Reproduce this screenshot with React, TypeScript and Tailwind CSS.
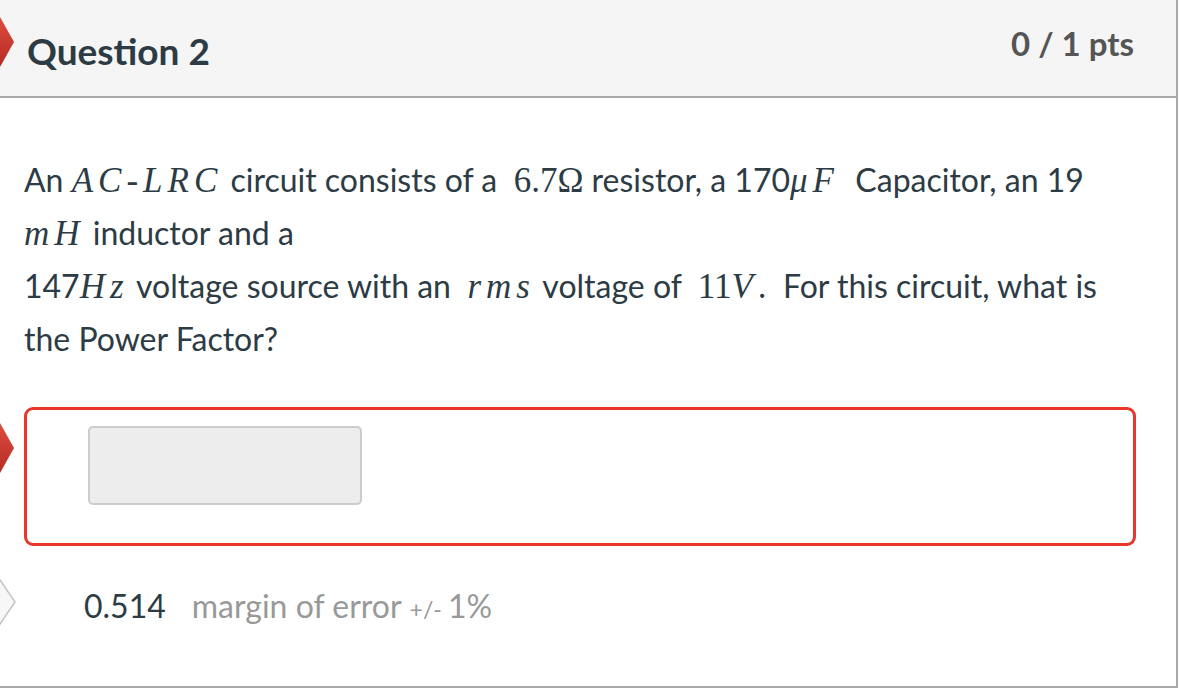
import React from "react";

const serif = "font-['Liberation_Serif','Times_New_Roman',serif]";

const Math: React.FC<{ children: React.ReactNode; className?: string }> = ({ children, className = "" }) => (
  <span className={`${serif} italic text-[35px] tracking-[5px] ${className}`}>{children}</span>
);

const Roman: React.FC<{ children: React.ReactNode; className?: string }> = ({ children, className = "" }) => (
  <span className={`${serif} text-[35px] ${className}`}>{children}</span>
);

const Arrow: React.FC<{ top: string; variant: "red" | "blank" }> = ({ top, variant }) => (
  <svg className={`absolute left-0 ${top}`} width="20" height="54" viewBox="0 0 20 54">
    <defs>
      <linearGradient id="redArrow" x1="0" y1="0" x2="0" y2="1">
        <stop offset="0" stopColor="#de4b3e" />
        <stop offset="1" stopColor="#b52c25" />
      </linearGradient>
    </defs>
    {variant === "red" ? (
      <polygon points="0,2 14,27 0,52" fill="url(#redArrow)" />
    ) : (
      <polygon points="-2,2 15,27 -2,52" fill="#f7f7f7" stroke="#c4c4c4" strokeWidth="1.5" />
    )}
  </svg>
);

export default function App() {
  return (
    <div className="relative w-[1180px] h-[692px] bg-white overflow-hidden font-['Lato','Noto_Sans',sans-serif] text-[#2d3b45]">
      <div className="w-[1178px] h-[688px] border-r-2 border-b-2 border-[#a8a8a8]">
        {/* header */}
        <div className="h-[98px] bg-[#f5f5f5] border-b-2 border-[#a8a8a8] flex items-start justify-between pl-[27px] pr-[42px]">
          <h2 className="mt-[32px] text-[37px] leading-none font-bold text-[#2d3b45]">Question 2</h2>
          <div className="mt-[27px] text-[33px] leading-none font-bold text-[#555555]">0 / 1 pts</div>
        </div>

        {/* question text */}
        <div className="px-[24px] pt-[56px] text-[32px] leading-[52px]">
          <p>
            An <Math>AC-LRC</Math> circuit consists of a&nbsp; <Roman>6.7Ω</Roman> resistor, a 170
            <Math>μF</Math>&nbsp; Capacitor, an 19
            <br />
            <Math>mH</Math> inductor and a
            <br />
            147<Math>Hz</Math> voltage source with an&nbsp; <Math>rms</Math> voltage of&nbsp;{" "}
            <Roman>11</Roman>
            <Math>V</Math>
            <Roman>.</Roman>&nbsp; For this circuit, what is
            <br />
            the Power Factor?
          </p>
        </div>

        {/* answer box */}
        <div className="ml-[24px] mr-[40px] mt-[42px] h-[139px] border-[3px] border-[#e8372a] rounded-[9px] pl-[61px] pt-[16px]">
          <div className="w-[274px] h-[79px] bg-[#ededed] border-2 border-[#cccccc] rounded-[5px]" />
        </div>

        {/* correct answer */}
        <div className="pl-[84px] pt-[44px] flex items-baseline text-[32px] leading-none">
          <span className="text-[#2d3b45]">0.514</span>
          <span className="ml-[26px] text-[#999999]">margin of error</span>
          <span className="ml-[8px] text-[23px] text-[#999999]">+/-</span>
          <span className="ml-[6px] text-[#999999]">1%</span>
        </div>
      </div>

      <Arrow top="top-[15px]" variant="red" />
      <Arrow top="top-[421px]" variant="red" />
      <Arrow top="top-[575px]" variant="blank" />
    </div>
  );
}
